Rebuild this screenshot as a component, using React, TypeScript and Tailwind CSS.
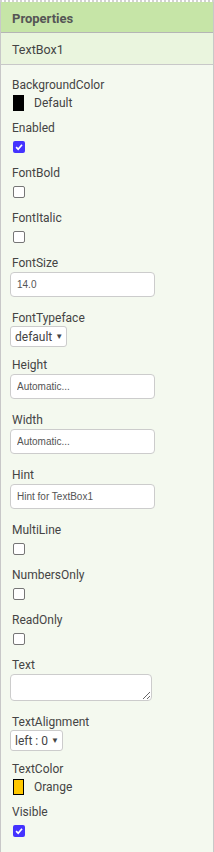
import type { ReactNode } from "react";

type Prop =
  | { kind: "check"; label: string; checked?: boolean }
  | { kind: "input"; label: string; value: string }
  | { kind: "select"; label: string; value: string }
  | { kind: "color"; label: string; name: string; swatch: string }
  | { kind: "area"; label: string };

const props: Prop[] = [
  { kind: "color", label: "BackgroundColor", name: "Default", swatch: "bg-black" },
  { kind: "check", label: "Enabled", checked: true },
  { kind: "check", label: "FontBold" },
  { kind: "check", label: "FontItalic" },
  { kind: "input", label: "FontSize", value: "14.0" },
  { kind: "select", label: "FontTypeface", value: "default" },
  { kind: "input", label: "Height", value: "Automatic..." },
  { kind: "input", label: "Width", value: "Automatic..." },
  { kind: "input", label: "Hint", value: "Hint for TextBox1" },
  { kind: "check", label: "MultiLine" },
  { kind: "check", label: "NumbersOnly" },
  { kind: "check", label: "ReadOnly" },
  { kind: "area", label: "Text" },
  { kind: "select", label: "TextAlignment", value: "left : 0" },
  { kind: "color", label: "TextColor", name: "Orange", swatch: "bg-[#ffc800]" },
  { kind: "check", label: "Visible", checked: true },
];

const Checkbox = ({ checked }: { checked?: boolean }) =>
  checked ? (
    <span className="ml-[1px] flex h-[12px] w-[12px] items-center justify-center rounded-[2px] bg-[#4433ff]">
      <svg viewBox="0 0 12 12" className="h-[10px] w-[10px]">
        <path d="M2.5 6.2 L5 8.6 L9.6 3.2" fill="none" stroke="#fff" strokeWidth="2" />
      </svg>
    </span>
  ) : (
    <span className="ml-[1px] block h-[12px] w-[12px] rounded-[2px] border border-[#767676] bg-white" />
  );

const Label = ({ children }: { children: ReactNode }) => (
  <div className="ml-[2px] h-[16px] text-[12px] leading-[16px] text-[#444]">{children}</div>
);

const Row = ({ p }: { p: Prop }) => {
  switch (p.kind) {
    case "check":
      return (
        <div className="pb-[12px]">
          <Label>{p.label}</Label>
          <div className="mt-[5px] pl-[2px]">
            <Checkbox checked={p.checked} />
          </div>
        </div>
      );
    case "input":
      return (
        <div className="pb-[13px]">
          <Label>{p.label}</Label>
          <input
            defaultValue={p.value}
            className="mt-px block h-[25px] w-[145px] rounded-[4px] border border-[#ccc] bg-white px-[6px] font-['Liberation_Sans',Arial,sans-serif] text-[10px] text-[#555] outline-none"
          />
        </div>
      );
    case "select":
      return (
        <div className="pb-[10px]">
          <Label>{p.label}</Label>
          <div className="flex">
            <div className="flex h-[21px] items-center gap-[3px] whitespace-nowrap rounded-[3px] border border-[#ccc] bg-white pl-[4px] pr-[3px] text-[12px] text-[#444]">
              <span>{p.value}</span>
              <span className="text-[8px]">▼</span>
            </div>
          </div>
        </div>
      );
    case "color":
      return (
        <div className="pb-[9px]">
          <Label>{p.label}</Label>
          <div className="mt-[2px] flex h-[16px] items-center pl-[3px]">
            <span className={`h-[16px] w-[11px] border border-black ${p.swatch}`} />
            <span className="ml-[10px] text-[12px] text-[#444]">{p.name}</span>
          </div>
        </div>
      );
    case "area":
      return (
        <div className="pb-[13px]">
          <Label>{p.label}</Label>
          <textarea className="mt-px block h-[27px] w-[142px] rounded-[4px] border border-[#ccc] bg-white outline-none" />
        </div>
      );
  }
};

export default function App() {
  return (
    <div className="flex min-h-[852px] w-[214px] flex-col font-['Roboto',sans-serif]">
      <div className="h-[2px] border-t-2 border-dotted border-[#d0d0d0] bg-white" />
      <div className="flex flex-1 flex-col border-x border-[#c8c8c8]">
        <div className="flex h-[31px] items-center border-b border-[#b5b5b5] bg-[#c6e5a7] px-[11px] pt-[3px] text-[13px] font-bold text-[#555]">
          Properties
        </div>
        <div className="flex h-[32px] items-center border-b border-[#c8c8c8] bg-[#eaf5de] px-[11px] pt-[3px] text-[12.5px] text-[#444]">
          TextBox1
        </div>
        <div className="flex-1 bg-[#f4f9ef] px-[9px] pt-[12px]">
          {props.map((p) => (
            <Row key={p.label} p={p} />
          ))}
        </div>
      </div>
    </div>
  );
}
